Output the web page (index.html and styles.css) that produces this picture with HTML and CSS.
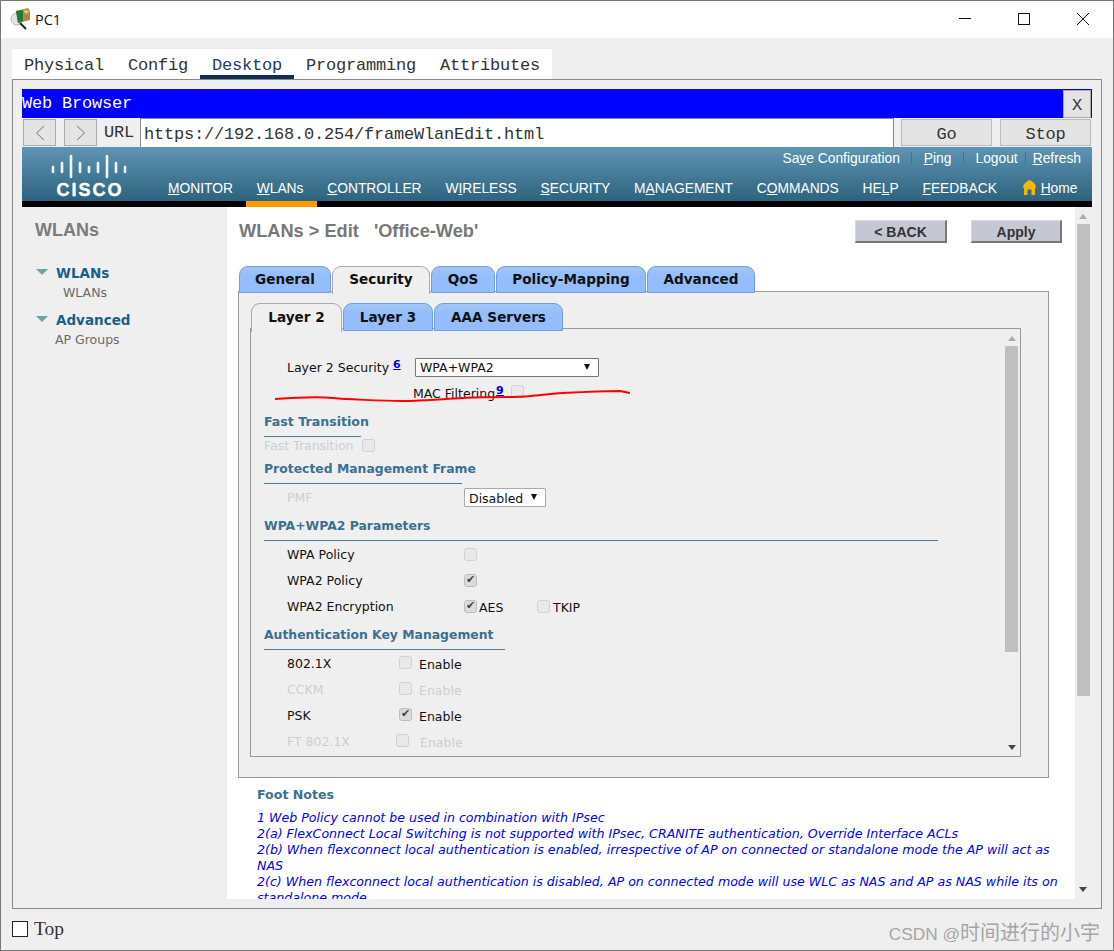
FILE: index.html
```html
<!DOCTYPE html>
<html lang="en">
<head>
<meta charset="utf-8">
<title>PC1</title>
<link rel="stylesheet" href="styles.css">
</head>
<body>
<div class="window">
  <header class="titlebar">
    <svg class="app-icon" width="22" height="24" viewBox="0 0 22 24">
      <circle cx="7" cy="13" r="6" fill="#e4e4e4" stroke="#b5b5b5"/>
      <path d="M10 17l6 6" stroke="#222" stroke-width="2"/>
      <path d="M6 5l12-3 2 3v9l-12 3z" fill="#b08a3c"/>
      <path d="M6 5l7-1v11l-5 2z" fill="#1f7a34"/>
      <path d="M13 4l7 1-4 3z" fill="#e6c87a"/>
    </svg>
    <span class="app-name">PC1</span>
    <div class="winbtns">
      <svg width="14" height="14" viewBox="0 0 14 14"><path d="M1 6.5h12" stroke="#111"/></svg>
      <svg width="14" height="14" viewBox="0 0 14 14"><rect x="1.5" y="1.5" width="11" height="11" fill="none" stroke="#111"/></svg>
      <svg width="14" height="14" viewBox="0 0 14 14"><path d="M1 1l12 12M13 1L1 13" stroke="#111"/></svg>
    </div>
  </header>

  <main class="main">
    <nav class="app-tabs">
      <span class="app-tab">Physical</span>
      <span class="app-tab">Config</span>
      <span class="app-tab is-active">Desktop</span>
      <span class="app-tab">Programming</span>
      <span class="app-tab">Attributes</span>
    </nav>
    <section class="desk">
      <div class="blue-bar"><span>Web Browser</span><span class="close-x">X</span></div>
      <div class="url-row">
        <span class="nav-btn"><svg width="10" height="16" viewBox="0 0 10 16"><path d="M9 1L1.5 8 9 15" fill="none" stroke="#777"/></svg></span>
        <span class="nav-btn"><svg width="10" height="16" viewBox="0 0 10 16"><path d="M1 1l7.5 7L1 15" fill="none" stroke="#777"/></svg></span>
        <span class="url-label">URL</span>
        <span class="url-input">https://192.168.0.254/frameWlanEdit.html</span>
        <span class="go-btn">Go</span>
        <span class="go-btn">Stop</span>
      </div>

      <div class="cisco">
        <div class="cisco-main">
          <div class="logo">
            <svg width="80" height="26" viewBox="0 0 80 26">
              <g fill="none" stroke="#fff" stroke-width="2.6" stroke-linecap="round" opacity=".92">
                <path d="M4 13v5M13 9v9M22 2v21M31 9v9M40 13v5M49 9v9M58 2v21M67 9v9M76 13v5"/>
              </g>
            </svg>
            <span class="logo-word">CISCO</span>
          </div>
          <div class="cisco-right">
            <div class="util">
              <span>Sa<u>v</u>e Configuration</span><i></i>
              <span><u>P</u>ing</span><i></i>
              <span>Logout</span><i class="tight"></i>
              <span><u>R</u>efresh</span>
            </div>
            <div class="menu">
              <span><u>M</u>ONITOR</span>
              <span><u>W</u>LANs</span>
              <span><u>C</u>ONTROLLER</span>
              <span>W<u>I</u>RELESS</span>
              <span><u>S</u>ECURITY</span>
              <span>M<u>A</u>NAGEMENT</span>
              <span>C<u>O</u>MMANDS</span>
              <span>HE<u>L</u>P</span>
              <span><u>F</u>EEDBACK</span>
              <span class="home"><svg width="13" height="15" viewBox="0 0 13 15"><path d="M6.5 0C3 1.5.5 4 0 7l1 1v7h3.5V9.500h4V15H12V8l1-1C12.500 4 10 1.500 6.500 0z" fill="#f5b800"/></svg><span><u>H</u>ome</span></span>
            </div>
          </div>
        </div>
        <div class="black-line"><span class="gold"></span></div>
      </div>

      <div class="viewport">
        <aside class="side">
          <div class="side-title">WLANs</div>
          <div class="tree-head first"><b class="tri"></b>WLANs</div>
          <div class="tree-sub indent">WLANs</div>
          <div class="tree-head"><b class="tri"></b>Advanced</div>
          <div class="tree-sub">AP Groups</div>
        </aside>

        <div class="page">
          <div class="page-top">
            <h1>WLANs &gt; Edit &nbsp; 'Office-Web'</h1>
            <div class="page-btns"><span class="raised">&lt; BACK</span><span class="raised">Apply</span></div>
          </div>

          <div class="tabs">
            <span class="tab w1">General</span>
            <span class="tab w2 on">Security</span>
            <span class="tab w3">QoS</span>
            <span class="tab w4">Policy-Mapping</span>
            <span class="tab w5">Advanced</span>
          </div>
          <div class="tab-panel">
            <div class="tabs sub">
              <span class="tab s1 on">Layer 2</span>
              <span class="tab s2">Layer 3</span>
              <span class="tab s3">AAA Servers</span>
            </div>
            <div class="inner">
              <div class="form">
                <div class="row sec-row">
                  <span class="sec-label">Layer 2 Security <a class="fn">6</a></span>
                  <span class="sel sel-wide">WPA+WPA2</span>
                </div>
                <div class="row mac-row">MAC Filtering<a class="fn tight-fn">9</a><span class="cb mac-cb"></span></div>

                <div class="head head-first h-fast">Fast Transition</div>
                <div class="row fast-row muted">Fast Transition<span class="cb fast-cb"></span></div>

                <div class="head h-pmf">Protected Management Frame</div>
                <div class="row opt"><span class="lab wide muted">PMF</span><span class="sel sel-small">Disabled</span></div>

                <div class="head h-wpa">WPA+WPA2 Parameters</div>
                <div class="row opt"><span class="lab wide">WPA Policy</span><span class="cb"></span></div>
                <div class="row opt"><span class="lab wide">WPA2 Policy</span><span class="cb checked"></span></div>
                <div class="row opt"><span class="lab wide">WPA2 Encryption</span><span class="cb checked"></span><span class="aes">AES</span><span class="cb"></span><span class="tkip">TKIP</span></div>

                <div class="head h-auth">Authentication Key Management</div>
                <div class="row opt auth"><span class="lab narrow">802.1X</span><span class="cb"></span><span class="enable">Enable</span></div>
                <div class="row opt auth muted"><span class="lab narrow">CCKM</span><span class="cb"></span><span class="enable">Enable</span></div>
                <div class="row opt auth"><span class="lab narrow">PSK</span><span class="cb checked"></span><span class="enable">Enable</span></div>
                <div class="row opt auth muted"><span class="lab narrower">FT 802.1X</span><span class="cb"></span><span class="enable far">Enable</span></div>
              </div>
              <div class="scroll inner-scroll"><b class="up"></b><b class="thumb"></b><b class="down"></b></div>
            </div>
          </div>

          <div class="notes">
            <h2>Foot Notes</h2>
            <p>1 Web Policy cannot be used in combination with IPsec<br>
            2(a) FlexConnect Local Switching is not supported with IPsec, CRANITE authentication, Override Interface ACLs<br>
            2(b) When flexconnect local authentication is enabled, irrespective of AP on connected or standalone mode the AP will act as NAS<br>
            2(c) When flexconnect local authentication is disabled, AP on connected mode will use WLC as NAS and AP as NAS while its on standalone mode</p>
          </div>
        </div>
        <div class="scroll page-scroll"><b class="up"></b><b class="thumb"></b><b class="down"></b></div>
      </div>
    </section>
  </main>

  <footer class="bottom">
    <span class="top-box"></span><span class="top-text">Top</span>
  </footer>

  <svg class="scribble" width="370" height="20" viewBox="0 0 370 20">
    <path d="M2 13C30 11 50 11 60 12S110 15 130 15 170 13 190 12 220 11 240 11 270 8 290 7 330 5 347 5L357 7" fill="none" stroke="#f00" stroke-width="2"/>
  </svg>
  <span class="watermark"><span class="wm-latin">CSDN @</span>时间进行的小宇</span>
</div>
</body>
</html>
```

FILE: styles.css
```css
* { box-sizing: border-box; }
html, body { margin: 0; padding: 0; }
body { width: 1114px; height: 951px; overflow: hidden; background: #efefef; }
a { color: #0000ee; }
u { text-decoration: underline; }

.window {
  position: relative;
  width: 1114px;
  height: 951px;
  display: flex;
  flex-direction: column;
  border: 1px solid #777;
  background: #efefef;
  font-family: "Liberation Sans", sans-serif;
}

.titlebar {
  flex: none;
  height: 37px;
  background: #fff;
  display: flex;
  align-items: center;
  padding-left: 9px;
}
.app-icon { flex: none; margin-top: -3px; }
.app-name { margin-left: 3px; margin-top: -1px; font: 14.5px "Open Sans", "Liberation Sans", sans-serif; color: #111; }
.winbtns { margin-left: auto; display: flex; gap: 45px; padding-right: 23px; margin-top: -1px; }
.winbtns svg { display: block; }

.main { flex: none; padding: 11px 11px 0; }

.app-tabs {
  display: flex;
  width: 540px;
  height: 30px;
  background: #fff;
  font: 17px/34px "Liberation Mono", monospace;
  letter-spacing: -.2px;
  color: #333;
}
.app-tab { padding: 0 12px; height: 30px; white-space: nowrap; }
.app-tab.is-active { border-bottom: 4px solid #0f2d56; color: #1d3c66; line-height: 34px; }

.desk {
  width: 1090px;
  height: 830px;
  border: 1px solid #8a8a8a;
  padding: 9px 9px 0;
}

.blue-bar {
  height: 29px;
  background: #00f;
  color: #fff;
  display: flex;
  justify-content: space-between;
  font: 17px/30px "Liberation Mono", monospace;
  letter-spacing: -.2px;
}
.close-x {
  width: 28px;
  height: 28px;
  margin: 1px 1px 0 0;
  background: #e4e4e4;
  border: 1px solid #aaa;
  color: #333;
  text-align: center;
  font-size: 17px;
  line-height: 29px;
}

.url-row {
  height: 29px;
  display: flex;
  align-items: center;
  font: 17px "Liberation Mono", monospace;
  letter-spacing: -.2px;
  color: #333;
}
.nav-btn {
  width: 33px;
  height: 27px;
  margin-left: 1px;
  margin-right: 8px;
  background: #e4e4e4;
  border: 1px solid #aaa;
  display: flex;
  align-items: center;
  justify-content: center;
}
.nav-btn + .nav-btn { margin: 0; }
.url-label { width: 43px; padding-left: 7px; }
.url-input {
  width: 754px;
  height: 29px;
  background: #fff;
  border-top: 1px solid #888;
  border-left: 1px solid #888;
  border-right: 1px solid #888;
  padding-left: 3px;
  line-height: 31px;
}
.go-btn {
  width: 91px;
  height: 27px;
  margin-left: 8px;
  background: #e4e4e4;
  border: 1px solid #bbb;
  text-align: center;
  line-height: 29px;
}
.url-input + .go-btn { margin-left: 7px; }

.cisco { height: 60px; display: flex; flex-direction: column; }
.cisco-main {
  height: 54px;
  background: linear-gradient(#5d95b3, #2e627e);
  display: flex;
  color: #fff;
}
.logo { width: 134px; padding-top: 7px; display: flex; flex-direction: column; align-items: center; }
.logo svg { display: block; }
.logo-word {
  font: bold 18px/17px "Liberation Sans", sans-serif;
  letter-spacing: 2px;
  margin-top: 2px;
  padding-left: 2px;
  -webkit-text-stroke: .4px #fff;
}
.cisco-right { flex: 1; min-width: 0; display: flex; flex-direction: column; align-items: stretch; }
.util {
  height: 22px;
  display: flex;
  justify-content: flex-end;
  align-items: center;
  padding-right: 11px;
  font: 13.800px "Liberation Sans", sans-serif;
  white-space: nowrap;
}
.util i { width: 1px; height: 12px; margin: 0 11.500px; background: #3f7593; }
.util i.tight { margin: 0 7px; }
.menu {
  display: flex;
  gap: 23.800px;
  padding-left: 12px;
  margin-top: 10px;
  font: 13.800px/20px "Liberation Sans", sans-serif;
  white-space: nowrap;
}
.home { display: flex; align-items: center; gap: 5px; margin-left: 2px; }
.home svg { margin-top: -3px; }
.black-line { height: 6px; background: #000; padding-left: 224px; }
.gold { display: block; width: 71px; height: 6px; background: #f90; }

.viewport { height: 692px; display: flex; }
.side { flex: none; width: 205px; padding: 14px 0 0 13px; }
.side-title { font: bold 18px/18px "Liberation Sans", sans-serif; color: #7b7b7b; }
.tree-head {
  display: flex;
  align-items: center;
  margin-top: 11px;
  font: bold 13.500px/16px "DejaVu Sans", sans-serif;
  color: #1a5f85;
}
.tree-head.first { margin-top: 26px; }
.tri {
  width: 0;
  height: 0;
  margin: -3px 8px 0 1px;
  border-left: 6px solid transparent;
  border-right: 6px solid transparent;
  border-top: 6px solid #6fa1a3;
}
.tree-sub { margin-top: 4px; padding-left: 20px; font: 12.500px/16px "DejaVu Sans", sans-serif; color: #6a6a6a; }
.tree-sub.indent { padding-left: 28px; }

.page { flex: none; width: 848px; height: 692px; overflow: hidden; background: #fff; padding: 13px 13px 0 11px; }
.page-top { display: flex; justify-content: space-between; height: 23px; }
.page-top h1 { margin: 0 0 0 1px; font: bold 18.200px/22px "Liberation Sans", sans-serif; color: #777; }
.page-btns { display: flex; gap: 24px; }
.raised {
  width: 92px;
  height: 23px;
  background: #c5c7d3;
  border: 1px solid #d8d9e0;
  border-right: 2px solid #777;
  border-bottom: 2px solid #777;
  text-align: center;
  font: bold 14px/22px "Liberation Sans", sans-serif;
  color: #333;
}
.raised + .raised { width: 91px; }

.tabs { display: flex; gap: 1px; height: 27px; margin: 23px 0 -2px 1px; position: relative; }
.tab {
  height: 27px;
  background: linear-gradient(#a2c5f8, #93bdfc 40%);
  border: 1px solid #6e9fdc;
  border-radius: 9px 9px 0 0;
  text-align: center;
  font: bold 13.600px/25px "DejaVu Sans", sans-serif;
  color: #111;
}
.tab.on { background: #efefef; border-color: #aaa; border-bottom: 0; height: 28px; }
.w1 { width: 92px; } .w2 { width: 98px; } .w3 { width: 64px; } .w4 { width: 150px; } .w5 { width: 108px; }

.tab-panel {
  width: 811px;
  height: 487px;
  background: #efefef;
  border: 1px solid #999;
  padding: 11px 27px 0 11px;
}
.tabs.sub { height: 28px; margin: 0 0 -3px 1px; }
.sub .tab { height: 28px; line-height: 26px; }
.sub .tab.on { height: 29px; }
.s1 { width: 91px; } .s2 { width: 90px; } .s3 { width: 129px; }

.inner {
  width: 771px;
  height: 429px;
  border: 1px solid #999;
  display: flex;
  justify-content: space-between;
}
.form { padding: 28px 0 0 13px; font: 12.500px "DejaVu Sans", sans-serif; color: #111; }
.row { display: flex; align-items: center; white-space: nowrap; }
.muted, .muted .lab { color: #cfcfcf; }
.sec-row { height: 21px; padding-left: 23px; }
.sec-label { width: 128px; margin-top: -2px; }
.fn { font-size: 11px; font-weight: bold; text-decoration: underline; vertical-align: 4px; }
.tight-fn { margin: -6px 0 0 1px; }
.sel {
  position: relative;
  height: 19px;
  background: #fff;
  border: 1px solid #777;
  border-radius: 1px;
  padding-left: 4px;
  line-height: 17px;
}
.sel::after {
  content: "";
  position: absolute;
  right: 8px;
  top: 5px;
  border-left: 3.500px solid transparent;
  border-right: 3.500px solid transparent;
  border-top: 6px solid #111;
}
.sel-wide { width: 184px; }
.sel-small { width: 82px; border-color: #aaa; line-height: 19px; }
.mac-row { height: 20px; margin-top: 5px; padding-left: 149px; }
.cb {
  flex: none;
  display: inline-block;
  position: relative;
  width: 13px;
  height: 13px;
  margin-top: -3px;
  background: #e9e9e9;
  border: 1px solid #d2d2d2;
  border-radius: 3px;
}
.cb.checked { background: #dcdcdc; border-color: #bdbdbd; }
.cb.checked::after {
  content: "\2714";
  position: absolute;
  left: 1px;
  top: -2px;
  font: 11px/14px "DejaVu Sans", sans-serif;
  color: #444;
}
.opt .cb, .fast-cb.cb { margin-top: 0; }
.auth .cb { margin-top: -2px; }
.mac-cb { margin-left: 7px; }
.head {
  height: 25px;
  margin-top: 6px;
  border-bottom: 1px solid #4f7d96;
  font: bold 12.400px/20px "DejaVu Sans", sans-serif;
  color: #3b7090;
  white-space: nowrap;
}
.head-first { margin-top: 9px; font-size: 12.600px; }
.h-fast { width: 97px; } .h-pmf { width: 198px; } .h-wpa { width: 674px; } .h-auth { width: 241px; }
.fast-row { height: 16px; }
.fast-cb { margin-left: 8px; }
.opt { height: 26px; padding-left: 23px; }
.lab { flex: none; }
.wide { width: 177px; }
.narrow { width: 112px; }
.narrower { width: 109px; }
.aes { margin-left: 2px; width: 58px; padding-top: 2px; }
.tkip { margin-left: 3px; padding-top: 2px; }
.enable { margin-left: 7px; padding-top: 2px; }
.enable.far { margin-left: 11px; }

.scroll { flex: none; position: relative; width: 17px; }
.inner-scroll { width: 15px; padding-right: 2px; }
.scroll .thumb { position: absolute; left: 0; width: 13px; background: #c0c0c0; }
.inner-scroll .thumb { top: 17px; height: 306px; }
.page-scroll .thumb { top: 17px; height: 472px; left: 2px; }
.scroll .up, .scroll .down { position: absolute; left: 3px; width: 0; height: 0; border-left: 4px solid transparent; border-right: 4px solid transparent; }
.page-scroll .up, .page-scroll .down { left: 4px; }
.scroll .up { top: 7px; border-bottom: 5px solid #aaa; }
.inner-scroll .down { top: 416px; border-top: 5px solid #444; }
.page-scroll .down { top: 680px; border-top: 5px solid #444; }

.notes { padding-left: 19px; margin-top: 9px; width: 830px; }
.notes h2 { margin: 0; font: bold 12.600px/16px "DejaVu Sans", sans-serif; color: #3b7090; }
.notes p { margin: 7px 0 0; font: italic 12.620px/16px "DejaVu Sans", sans-serif; color: #0000f0; }

.bottom { flex: none; display: flex; align-items: center; padding: 9px 0 0 11px; }
.top-box { width: 16px; height: 16px; background: #fff; border: 1px solid #222; }
.top-text { margin-left: 6px; font: 19.500px "Liberation Serif", serif; color: #333; }

.scribble { position: absolute; left: 272px; top: 385px; }
.watermark {
  position: absolute;
  right: 13px;
  top: 916px;
  font: 20px "Noto Sans CJK SC", sans-serif;
  color: #a5a5a5;
  white-space: nowrap;
}
.wm-latin { font: 17.300px "Liberation Sans", sans-serif; }
```
